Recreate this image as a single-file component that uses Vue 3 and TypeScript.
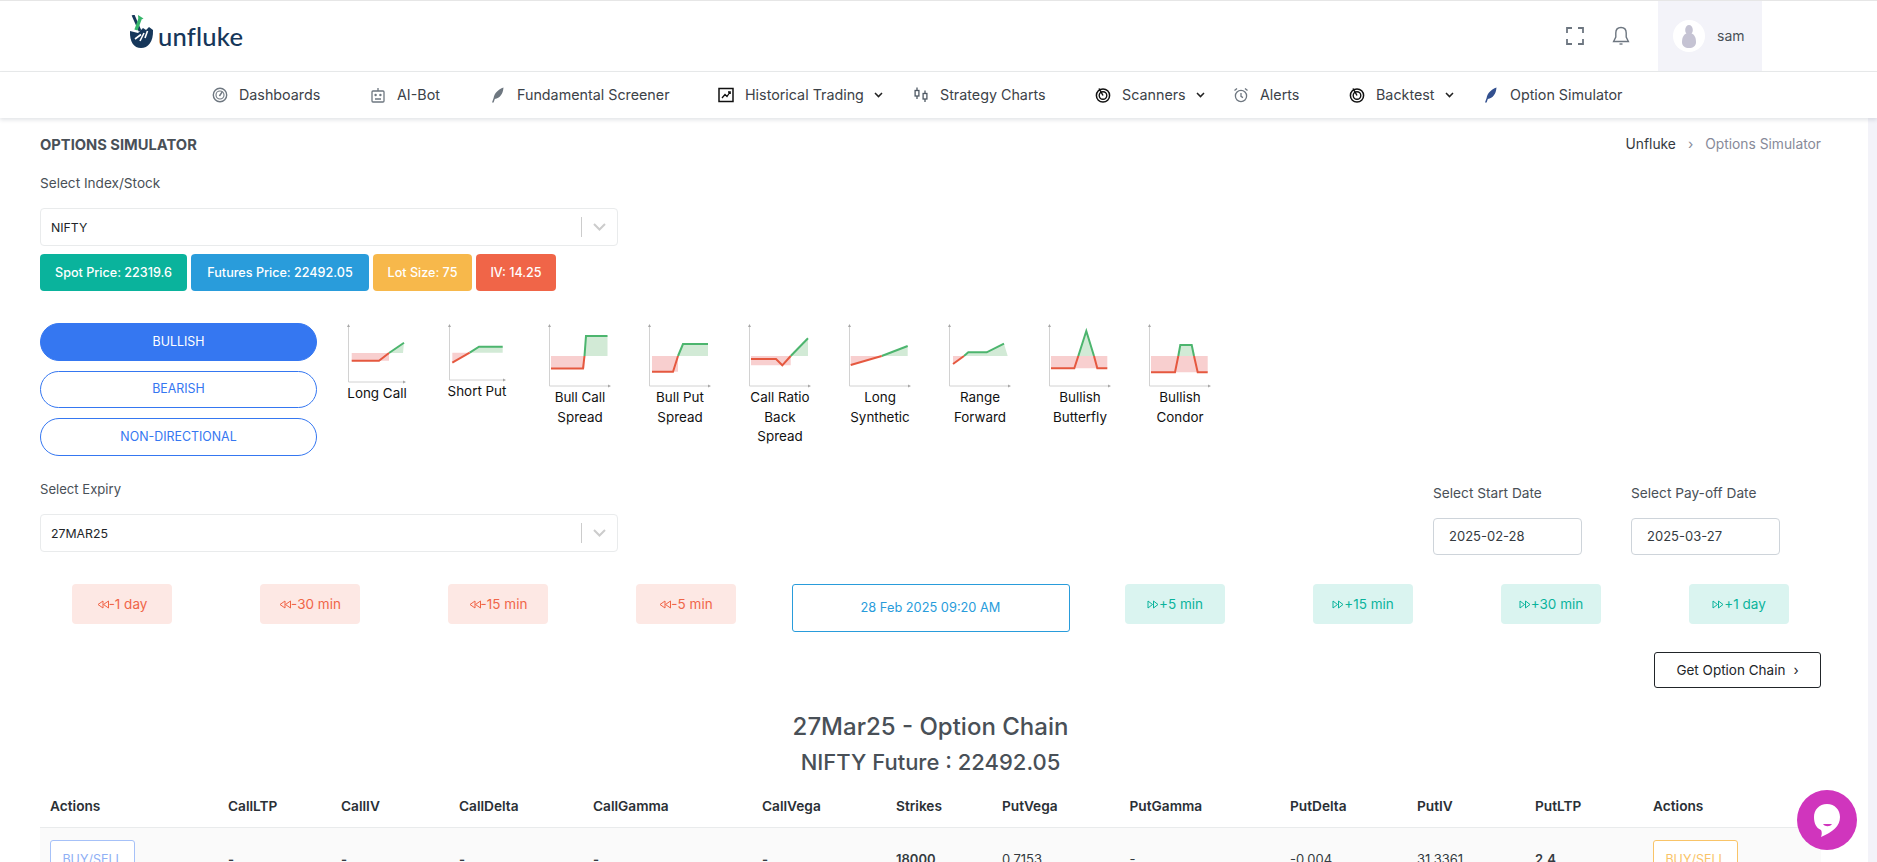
<script setup lang="ts">
interface NavItem { label: string; w: number; icon: string; caret?: boolean }
interface Strat { name: string[]; size: number; h: number; base: number; left: number; right: number; bottom: number; green: string; red: string[]; greens: string[]; shift?: number }

const nav: NavItem[] = [
  { label: 'Dashboards', w: 158, icon: 'gauge' },
  { label: 'AI-Bot', w: 120, icon: 'bot' },
  { label: 'Fundamental Screener', w: 228, icon: 'feather' },
  { label: 'Historical Trading', w: 195, icon: 'chart', caret: true },
  { label: 'Strategy Charts', w: 182, icon: 'candle' },
  { label: 'Scanners', w: 138, icon: 'spiral', caret: true },
  { label: 'Alerts', w: 116, icon: 'alarm' },
  { label: 'Backtest', w: 134, icon: 'spiral', caret: true },
  { label: 'Option Simulator', w: 140, icon: 'featherBlue' },
]

const badges = [
  { t: 'Spot Price: 22319.6', c: 'b-green', w: 147 },
  { t: 'Futures Price: 22492.05', c: 'b-blue', w: 178 },
  { t: 'Lot Size: 75', c: 'b-amber', w: 99 },
  { t: 'IV: 14.25', c: 'b-red', w: 80 },
]

const strategies: Strat[] = [
  { name: ['Long Call'], size: 57, h: 57, base: 28, left: 3.7, right: 55, bottom: 35.7, green: '41,28 56,17.7 55,28', red: ['3.7,35.7 31,35.7 41,28'], greens: ['41,28 56,17.7'] },
  { name: ['Short Put'], size: 56, h: 55, base: 27.7, left: 3.3, right: 53.7, bottom: 37.7, green: '20.7,27.7 30,21.7 53.7,21.7 53.7,27.7', red: ['3.3,37.7 20.7,27.7'], greens: ['20.7,27.7 30,21.7 53.7,21.7'] },
  { name: ['Bull Call', 'Spread'], size: 61, h: 61, base: 31, left: 2, right: 58.5, bottom: 43.5, green: '35.5,31 37,11 58.5,11 58.5,31', red: ['2,43.5 34,43.5 35.5,31'], greens: ['35.5,31 37,11 58.5,11'], shift: 3 },
  { name: ['Bull Put', 'Spread'], size: 61, h: 61, base: 31, left: 3, right: 59, bottom: 46.7, green: '29,31 34,19 59,19 59,31', red: ['3,46.7 24,46.7 29,31'], greens: ['29,31 34,19 59,19'] },
  { name: ['Call Ratio', 'Back', 'Spread'], size: 61, h: 61, base: 31, left: 2, right: 59, bottom: 40.3, green: '41.7,31 59,13.3 59,31', red: ['2,34 27,34 33.3,40.3 41.7,31'], greens: ['41.7,31 59,13.3'] },
  { name: ['Long', 'Synthetic'], size: 61, h: 61, base: 31, left: 1.7, right: 58.7, bottom: 40, green: '32.7,31 58.7,21 58.7,31', red: ['1.7,40 32.7,31'], greens: ['32.7,31 58.7,21'] },
  { name: ['Range', 'Forward'], size: 61, h: 61, base: 31, left: 1.5, right: 58.7, bottom: 39, green: '15,31 19.3,27.3 37.7,27.3 55,18.7 58.7,31', red: ['4,39 15,31'], greens: ['15,31 19.3,27.3 37.7,27.3 55,18.7'] },
  { name: ['Bullish', 'Butterfly'], size: 61, h: 61, base: 31, left: 2, right: 58.3, bottom: 43.3, green: '29.3,31 37.3,6 45,31', red: ['2,43.3 25.3,43.3 29.3,31', '45,31 48.3,43.3 58.3,43.3'], greens: ['29.3,31 37.3,6 45,31'] },
  { name: ['Bullish', 'Condor'], size: 61, h: 61, base: 31, left: 2, right: 58.7, bottom: 47.3, green: '29.3,31 31.3,20 42.7,20 45,31', red: ['2,47.3 26,47.3 29.3,31', '45,31 48.7,47.3 58.7,47.3'], greens: ['29.3,31 31.3,20 42.7,20 45,31'] },
]

function redFill(s: Strat): string {
  const startY = s.red[0].split(' ')[0]
  if (s.name[0] === 'Bullish' || s.name[0].startsWith('Bull C') || s.name[0].startsWith('Bull P') || s.name[0] === 'Long Call' || s.name[0] === 'Call Ratio') {
    const right = s.name[0] === 'Bullish' ? s.right : s.red[0].split(' ').slice(-1)[0].split(',')[0]
    return `${s.left},${s.base} ${right},${s.base} ${right},${s.bottom} ${s.left},${s.bottom}`
  }
  const end = s.red[0].split(' ').slice(-1)[0]
  return `${startY} ${end} ${startY.split(',')[0]},${s.base}`
}

const back = ['-1 day', '-30 min', '-15 min', '-5 min']
const forward = ['+5 min', '+15 min', '+30 min', '+1 day']
const headers = ['Actions', 'CallLTP', 'CallIV', 'CallDelta', 'CallGamma', 'CallVega', 'Strikes', 'PutVega', 'PutGamma', 'PutDelta', 'PutIV', 'PutLTP', 'Actions']
const cells = ['-', '-', '-', '-', '-', '18000', '0.7153', '-', '-0.004', '31.3361', '2.4']
</script>

<template>
  <div class="page">
    <header class="topbar">
      <div class="logo">
        <svg width="25" height="34" viewBox="0 0 25 34" aria-hidden="true">
          <path d="M4 0 L11 16" stroke="#16375a" stroke-width="3" fill="none" />
          <path d="M11 4 L7 15" stroke="#35b56a" stroke-width="3.4" fill="none" />
          <path d="M9 0 L14.5 3.5 L9.5 6 Z" fill="#35b56a" />
          <path d="M1 16 L9 18 L14 13 L17 15 L20 12 L24 15 C24.5 27 19 33 12 33 C5 33 0.5 27 1 16 Z" fill="#16375a" />
          <path d="M6 24 L12 19.5 M11 26 L15 18 M16 23 L18.5 16" stroke="#fff" stroke-width="1.6" fill="none" />
        </svg>
        <span class="logo-text">unfluke</span>
      </div>
      <div class="top-right">
        <svg class="top-icon" width="18" height="18" viewBox="0 0 18 18" fill="none" stroke="#6d7680" stroke-width="1.8" aria-hidden="true">
          <path d="M1 6V1H6M12 1H17V6M17 12V17H12M6 17H1V12" />
        </svg>
        <svg class="top-icon bell" width="20" height="20" viewBox="0 0 20 20" fill="none" stroke="#6d7680" stroke-width="1.4" aria-hidden="true">
          <path d="M10 1.5C6.5 1.5 4.8 4 4.8 7V11L2.6 15.5H17.4L15.2 11V7C15.2 4 13.5 1.5 10 1.5Z" />
          <path d="M8.5 18H11.5" />
        </svg>
        <div class="user">
          <span class="avatar">
            <svg width="14" height="24" viewBox="0 0 14 24" aria-hidden="true">
              <ellipse cx="7" cy="6" rx="3.8" ry="5" fill="#c5c3d3" />
              <path d="M7 9C2 9 0 13 0 18C0 22 3 24 7 24C11 24 14 22 14 18C14 13 12 9 7 9Z" fill="#c5c3d3" />
            </svg>
          </span>
          <span class="user-name">sam</span>
        </div>
      </div>
    </header>

    <nav class="navbar">
      <div v-for="item in nav" :key="item.label" class="nav-item" :style="{ width: item.w + 'px' }">
        <svg class="nav-icon" width="16" height="16" viewBox="0 0 16 16" fill="none" aria-hidden="true">
          <template v-if="item.icon === 'gauge'">
            <circle cx="8" cy="8" r="6.7" stroke="#6e7780" stroke-width="1.4" />
            <circle cx="8" cy="8" r="4" stroke="#6e7780" stroke-width="1.1" />
            <path d="M7.4 9L10.4 4.6" stroke="#6e7780" stroke-width="1.5" />
          </template>
          <template v-else-if="item.icon === 'bot'">
            <rect x="2" y="4" width="12" height="11" rx="1" stroke="#6e7780" stroke-width="1.3" />
            <path d="M8 1V4M5 12H11" stroke="#6e7780" stroke-width="1.3" />
            <circle cx="5.6" cy="8" r="1.2" fill="#6e7780" /><circle cx="10.4" cy="8" r="1.2" fill="#6e7780" />
          </template>
          <path v-else-if="item.icon === 'feather'" d="M13.5 0.5C8 2.5 4.5 6 3.6 11L2 15.6H3.6L4.8 12C10 11 13 7 13.5 0.5Z" fill="#6e7780" />
          <path v-else-if="item.icon === 'featherBlue'" d="M13.5 0.5C8 2.5 4.5 6 3.6 11L2 15.6H3.6L4.8 12C10 11 13 7 13.5 0.5Z" fill="#33508f" />
          <template v-else-if="item.icon === 'chart'">
            <rect x="1" y="1.5" width="14" height="13" stroke="#111" stroke-width="1.5" />
            <path d="M4 11L7 7.5L9 9.5L12 5M10 5H12.2V7" stroke="#111" stroke-width="1.3" />
          </template>
          <template v-else-if="item.icon === 'candle'">
            <path d="M4 0.5V3.5M4 9V12M12 3.5V6.5M12 12V15" stroke="#4f5964" stroke-width="1.3" />
            <rect x="2.1" y="3.5" width="3.8" height="5.5" stroke="#4f5964" stroke-width="1.3" />
            <rect x="10.1" y="6.5" width="3.8" height="5.5" stroke="#4f5964" stroke-width="1.3" />
          </template>
          <template v-else-if="item.icon === 'spiral'">
            <circle cx="8" cy="8.5" r="6.6" stroke="#111" stroke-width="1.5" />
            <circle cx="8" cy="8.5" r="3.8" stroke="#111" stroke-width="1.4" />
            <path d="M8 8.5L4 1.5" stroke="#111" stroke-width="1.5" />
          </template>
          <template v-else>
            <circle cx="8" cy="9" r="5.6" stroke="#6e7780" stroke-width="1.3" />
            <path d="M8 6V9.4L10 10.6M1.5 3.6L4 1.4M14.5 3.6L12 1.4" stroke="#6e7780" stroke-width="1.3" />
          </template>
        </svg>
        <span class="nav-label">{{ item.label }}</span>
        <svg v-if="item.caret" class="caret" width="9" height="6" viewBox="0 0 9 6" fill="none" aria-hidden="true">
          <path d="M1 1L4.5 4.6L8 1" stroke="#222" stroke-width="1.5" />
        </svg>
      </div>
    </nav>

    <div class="body-row">
      <main class="content">
        <div class="title-row">
          <h1 class="title">OPTIONS SIMULATOR</h1>
          <div class="crumbs"><span class="crumb-a">Unfluke</span><span class="crumb-sep">›</span><span class="crumb-b">Options Simulator</span></div>
        </div>

        <label class="field-label first">Select Index/Stock</label>
        <div class="select">
          <span>NIFTY</span>
          <span class="sel-sep"></span>
          <svg width="13" height="8" viewBox="0 0 13 8" fill="none" aria-hidden="true"><path d="M1 1L6.5 6.5L12 1" stroke="#ccc" stroke-width="2" /></svg>
        </div>

        <div class="badges">
          <span v-for="b in badges" :key="b.t" class="badge" :class="b.c" :style="{ width: b.w + 'px' }">{{ b.t }}</span>
        </div>

        <section class="strategy-row">
          <div class="directions">
            <button class="dir active">BULLISH</button>
            <button class="dir bearish">BEARISH</button>
            <button class="dir">NON-DIRECTIONAL</button>
          </div>
          <div class="strategies">
            <div v-for="s in strategies" :key="s.name.join()" class="strategy" :style="{ marginLeft: (s.shift || 0) + 'px' }">
              <svg :width="s.size + 3" :height="s.h + 3" :viewBox="`-1 -1 ${s.size + 3} ${s.h + 3}`" aria-hidden="true">
                <polygon :points="redFill(s)" fill="#f8cfcf" />
                <polygon :points="s.green" fill="#d2ead6" />
                <path :d="`M0.5 1V${s.h}H${s.size - 1}`" stroke="#d2d2d2" stroke-width="1" fill="none" />
                <path :d="`M0.5 -1L-1 2H2Z M${s.size + 1} ${s.h}L${s.size - 2} ${s.h - 1.5}V${s.h + 1.5}Z`" fill="#a8a8a8" />
                <polyline v-for="g in s.greens" :key="g" :points="g" fill="none" stroke="#4cb56e" stroke-width="2" />
                <polyline v-for="r in s.red" :key="r" :points="r" fill="none" stroke="#e5583f" stroke-width="2" />
              </svg>
              <div class="strategy-name">
                <div v-for="line in s.name" :key="line">{{ line }}</div>
              </div>
            </div>
          </div>
        </section>

        <section class="expiry-row">
          <div class="expiry">
            <label class="field-label">Select Expiry</label>
            <div class="select expiry-select">
              <span>27MAR25</span>
              <span class="sel-sep"></span>
              <svg width="13" height="8" viewBox="0 0 13 8" fill="none" aria-hidden="true"><path d="M1 1L6.5 6.5L12 1" stroke="#ccc" stroke-width="2" /></svg>
            </div>
          </div>
          <div class="dates">
            <div class="date-field">
              <label class="field-label wide">Select Start Date</label>
              <div class="date-input">2025-02-28</div>
            </div>
            <div class="date-field">
              <label class="field-label wide">Select Pay-off Date</label>
              <div class="date-input">2025-03-27</div>
            </div>
          </div>
        </section>

        <section class="steps">
          <div v-for="b in back" :key="b" class="step-cell">
            <button class="step minus">
              <svg width="12" height="9" viewBox="0 0 12 9" fill="none" stroke="currentColor" aria-hidden="true"><path d="M6 1L1 4.5L6 8ZM11.5 1L6.5 4.5L11.5 8Z" /></svg>{{ b }}
            </button>
          </div>
          <div class="step-center"><div class="now">28 Feb 2025 09:20 AM</div></div>
          <div v-for="f in forward" :key="f" class="step-cell">
            <button class="step plus">
              <svg width="12" height="9" viewBox="0 0 12 9" fill="none" stroke="currentColor" aria-hidden="true"><path d="M1 1L5.5 4.5L1 8ZM6.5 1L11 4.5L6.5 8Z" /></svg>{{ f }}
            </button>
          </div>
        </section>

        <div class="chain-action">
          <button class="chain-btn">Get Option Chain<span class="chev">›</span></button>
        </div>

        <h2 class="chain-title">27Mar25 - Option Chain</h2>
        <h3 class="chain-sub">NIFTY Future : 22492.05</h3>

        <div class="table">
          <div class="thead">
            <div v-for="(h, i) in headers" :key="i" class="th">{{ h }}</div>
          </div>
          <div class="tr">
            <div class="td"><button class="buy b-left">BUY/SELL</button></div>
            <div v-for="(c, i) in cells" :key="i" class="td" :class="{ strong: c === '-' && i < 5 || c === '18000' || c === '2.4' }">{{ c }}</div>
            <div class="td"><button class="buy b-right">BUY/SELL</button></div>
          </div>
        </div>
      </main>
      <div class="scroll-track"></div>
    </div>

    <div class="chat">
      <svg width="30" height="36" viewBox="0 0 30 36" aria-hidden="true">
        <path d="M15 2C23 2 28 8 28 15C28 24 21 30 9 35C10 32 10 30 9 28C4 26 2 21 2 15C2 8 7 2 15 2Z" fill="#fff" />
        <path d="M11 22C13 25 18 25 20 22Z" fill="#d035bd" />
      </svg>
    </div>
  </div>
</template>

<style>
html, body { margin: 0; overflow: hidden; background: #fff; }
</style>

<style scoped>
.page {
  position: relative;
  width: 1877px;
  height: 862px;
  overflow: hidden;
  font-family: "Inter", "Open Sans", sans-serif;
  font-size: 13px;
  color: #495057;
  background: #fff;
}
.topbar {
  height: 70px;
  border-top: 1px solid #e6e6e6;
  border-bottom: 1px solid #e9ebec;
  display: flex;
  align-items: stretch;
  justify-content: space-between;
  padding: 0 115px 0 129px;
}
.logo { display: flex; align-items: flex-start; gap: 4px; padding-top: 14px; }
.logo-text {
  font-family: "Lato", sans-serif;
  font-size: 25.6px;
  font-weight: 500;
  line-height: 30px;
  color: #16375a;
  margin-top: 6px;
  letter-spacing: 0.2px;
}
.top-right { display: flex; align-items: stretch; }
.top-icon { align-self: center; margin-top: -1px; }
.bell { margin-left: 27px; margin-right: 27px; }
.user {
  width: 104px;
  background: #f3f3f9;
  display: flex;
  align-items: center;
  padding-left: 15px;
  box-sizing: border-box;
}
.avatar {
  width: 32px;
  height: 32px;
  border-radius: 50%;
  background: #fff;
  display: flex;
  align-items: center;
  justify-content: center;
}
.user-name { margin-left: 12px; font-size: 14px; margin-top: -2px; }

.navbar {
  height: 46px;
  display: flex;
  align-items: center;
  padding-left: 212px;
  box-shadow: 0 2px 4px rgba(15, 34, 58, 0.12);
  position: relative;
  z-index: 1;
  background: #fff;
}
.nav-item { display: flex; align-items: center; color: #333a42; flex: none; }
.nav-icon { flex: none; margin-top: -1px; }
.nav-label { margin-left: 11px; margin-top: -2px; font-size: 14.3px; white-space: nowrap; color: #3c4248; }
.caret { margin-left: 10px; }

.body-row { display: flex; height: 744px; }
.content { width: 1781px; margin-left: 40px; flex: none; }
.scroll-track { width: 9px; margin-left: 47px; background: #f3f3f9; flex: none; }

.title-row {
  display: flex;
  justify-content: space-between;
  align-items: center;
  height: 22px;
  margin-top: 16px;
}
.title { margin: 0; font-size: 14.7px; font-weight: 700; color: #495057; }
.crumbs { font-size: 13.8px; display: flex; align-items: center; margin-top: -2px; }
.crumb-a { color: #343a40; }
.crumb-sep { margin: 0 12px; color: #878a99; }
.crumb-b { color: #878a99; }

.field-label { display: block; height: 20px; line-height: 20px; font-size: 13.1px; color: #495057; white-space: nowrap; }
.first { margin-top: 17px; font-size: 13.6px; }
.wide { font-size: 13.7px; margin-top: -1px; }

.select {
  width: 578px;
  height: 38px;
  box-sizing: border-box;
  border: 1px solid #e9ebec;
  border-radius: 4px;
  margin-top: 15px;
  display: flex;
  align-items: center;
  padding: 0 11px 0 10px;
  font-size: 12.3px;
  color: #212529;
}
.sel-sep { width: 1px; height: 20px; background: #ccc; margin-left: auto; margin-right: 11px; }

.badges { display: flex; gap: 4px; margin-top: 8px; }
.badge {
  height: 37px;
  border-radius: 4px;
  color: #fff;
  display: flex;
  align-items: center;
  justify-content: center;
  font-size: 12.6px;
  font-weight: 500;
  white-space: nowrap;
}
.b-green { background: #0ab39c; }
.b-blue { background: #299cdb; }
.b-amber { background: #f7b84b; }
.b-red { background: #f06548; }

.strategy-row { display: flex; margin-top: 32px; height: 133px; }
.directions { width: 277px; flex: none; display: flex; flex-direction: column; gap: 10px; }
.dir {
  height: 38px;
  flex: none;
  box-sizing: border-box;
  border: 1px solid #3577f1;
  border-radius: 20px;
  background: #fff;
  color: #3577f1;
  font-family: inherit;
  font-size: 12.4px;
  padding: 0 0 2px;
}
.dir.active { background: #3577f1; color: #fff; }
.dir.bearish { height: 37px; }
.strategies { display: flex; margin-left: 10px; padding-top: 1px; }
.strategy { width: 100px; flex: none; display: flex; flex-direction: column; align-items: center; }
.strategy-name { text-align: center; font-size: 13.4px; line-height: 19.7px; color: #111; margin-top: 0; white-space: nowrap; }

.expiry-row { display: flex; justify-content: space-between; margin-top: 23px; height: 76px; }
.expiry-select { margin-top: 15px; }
.dates { display: flex; gap: 49px; padding-top: 5px; margin-right: 41px; }
.date-field { width: 149px; }
.date-input {
  box-sizing: border-box;
  height: 37px;
  width: 149px;
  margin-top: 15px;
  border: 1px solid #ced4da;
  border-radius: 4px;
  display: flex;
  align-items: center;
  padding: 0 0 2px 15px;
  color: #343a40;
  font-size: 13px;
}

.steps {
  display: grid;
  grid-template-columns: repeat(4, 188px) 301px repeat(4, 188px);
  margin: 29px 0 0 -12px;
  height: 48px;
}
.step-cell { display: flex; justify-content: center; align-items: flex-start; }
.step {
  width: 100px;
  height: 40px;
  border: 0;
  border-radius: 4px;
  font-family: inherit;
  font-size: 13.5px;
  display: flex;
  align-items: center;
  justify-content: center;
  gap: 0;
  padding: 0;
}
.minus { background: #fde8e4; color: #f06548; }
.plus { background: #daf4f0; color: #0ab39c; }
.step-center { display: flex; justify-content: center; }
.now {
  width: 278px;
  height: 48px;
  box-sizing: border-box;
  border: 1px solid #299cdb;
  border-radius: 3px;
  color: #299cdb;
  font-size: 12.8px;
  display: flex;
  align-items: center;
  justify-content: center;
  padding-bottom: 2px;
}

.chain-action { display: flex; justify-content: flex-end; margin-top: 20px; }
.chain-btn {
  width: 167px;
  height: 36px;
  box-sizing: border-box;
  border: 1px solid #212529;
  border-radius: 3px;
  background: #fff;
  font-family: inherit;
  font-size: 13.5px;
  color: #212529;
  display: flex;
  align-items: center;
  justify-content: center;
  padding: 0;
}
.chev { margin-left: 8px; }

.chain-title { margin: 22px 0 0; text-align: center; font-size: 24px; line-height: 34px; font-weight: 500; color: #495057; }
.chain-sub { margin: 2px 0 0; text-align: center; font-size: 22px; line-height: 32px; font-weight: 500; color: #495057; }

.table { margin-top: 8px; }
.thead, .tr {
  display: grid;
  grid-template-columns: 178px 113px 118px 134px 169px 134px 106px 127.5px 160.5px 127px 118px 118px 168px;
}
.thead { height: 41px; align-items: center; border-bottom: 1px solid #e9ebec; }
.th { padding-left: 10px; font-size: 13.7px; font-weight: 600; color: #2b3036; white-space: nowrap; margin-top: -2px; }
.tr { background: #fafafa; padding-top: 12px; height: 60px; align-items: start; }
.td { padding-left: 10px; height: 38px; display: flex; align-items: center; font-size: 13px; color: #343a40; white-space: nowrap; }
.strong { font-weight: 600; }
.buy {
  width: 85px;
  height: 38px;
  border-radius: 3px;
  background: #fff;
  font-family: inherit;
  font-size: 12.5px;
  padding: 0;
  box-sizing: border-box;
}
.b-left { border: 1px solid #a6c1f8; color: #8fb0f5; }
.b-right { border: 1px solid #f9c468; color: #f9c468; }

.chat {
  position: absolute;
  left: 1797px;
  top: 790px;
  width: 60px;
  height: 60px;
  border-radius: 50%;
  background: #d035bd;
  display: flex;
  align-items: center;
  justify-content: center;
  z-index: 3;
}
</style>
